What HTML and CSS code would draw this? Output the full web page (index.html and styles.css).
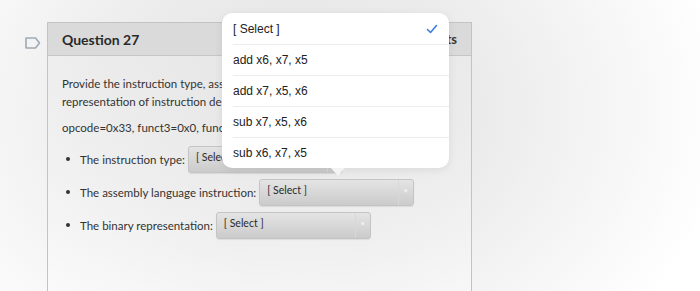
FILE: index.html
```html
<!DOCTYPE html>
<html lang="en">
<head>
    <meta charset="UTF-8">
    <meta name="viewport" content="width=device-width, initial-scale=1.0">
    <title>Question 27</title>
    <link rel="stylesheet" href="styles.css">
</head>
<body>
    <div class="quiz">
        <div class="flag">
            <svg width="16" height="12" viewBox="0 0 16 12">
                <path d="M1 1 H10.5 L14.5 6 L10.5 11 H1 Z" fill="none" stroke="#9fa9b5" stroke-width="1.6" stroke-linejoin="round"/>
            </svg>
        </div>
        <div class="question">
            <div class="header">
                <span class="title">Question 27</span>
                <span class="points">2 pts</span>
            </div>
            <div class="content">
                <p class="intro">Provide the instruction type, assembly language instruction, and binary representation of instruction described by the following RISC-V fields:</p>
                <p class="fields">opcode=0x33, funct3=0x0, funct7=0x20, rs1=5, rs2=6, rd=7</p>
                <ul class="answers">
                    <li><span class="label">The instruction type:</span><span class="select">[ Select ]<span class="arrow">&#9662;</span></span></li>
                    <li><span class="label">The assembly language instruction:</span><span class="select">[ Select ]<span class="arrow">&#9662;</span></span></li>
                    <li><span class="label">The binary representation:</span><span class="select">[ Select ]<span class="arrow">&#9662;</span></span></li>
                </ul>
            </div>
        </div>
    </div>

    <div class="picker">
        <div class="option selected">[ Select ]
            <svg class="check" width="12" height="10" viewBox="0 0 12 10">
                <path d="M1.5 5.5 L4.5 8.5 L10.5 1.5" fill="none" stroke="#3b7de0" stroke-width="1.6" stroke-linecap="round" stroke-linejoin="round"/>
            </svg>
        </div>
        <div class="option">add x6, x7, x5</div>
        <div class="option">add x7, x5, x6</div>
        <div class="option">sub x7, x5, x6</div>
        <div class="option">sub x6, x7, x5</div>
        <div class="tip"></div>
    </div>
</body>
</html>
```

FILE: styles.css
```css
body {
    margin: 0;
    height: 291px;
    overflow: hidden;
    font-family: Lato, "Open Sans", sans-serif;
    color: #2d3b45;
    background: radial-gradient(ellipse 430px 330px at 300px 110px, #e2e2e2 0%, #ececec 45%, #ffffff 100%);
}
.quiz {
    display: flex;
    padding: 22px 0 0 25px;
}
.flag {
    width: 22px;
    padding-top: 11px;
}
.question {
    width: 423px;
    height: 268px;
    border: 1px solid #c3c3c3;
    border-bottom: none;
    background: linear-gradient(180deg, rgba(230,230,230,0.4), rgba(255,255,255,0.3));
}
.header {
    display: flex;
    justify-content: space-between;
    align-items: center;
    height: 32px;
    padding: 0 14px;
    background: #dadada;
    border-bottom: 1px solid #c6c6c6;
}
.title {
    font-size: 14px;
    font-weight: bold;
    color: #2a2a2a;
}
.points {
    font-size: 13px;
    font-weight: bold;
    color: #3a3a3a;
}
.content {
    padding: 19px 14px 0 14px;
    font-size: 11.5px;
    line-height: 18px;
    color: #333;
}
.intro {
    margin: 0;
    width: 370px;
}
.fields {
    margin: 8px 0 0 0;
}
.answers {
    margin: 7px 0 0 0;
    padding-left: 18px;
    display: flex;
    flex-direction: column;
    gap: 6px;
}
.answers li {
    height: 27px;
    line-height: 27px;
}
.label {
    vertical-align: middle;
}
.select {
    display: inline-block;
    position: relative;
    vertical-align: middle;
    box-sizing: border-box;
    width: 155px;
    height: 27px;
    margin-left: 3px;
    padding: 3px 0 0 7px;
    font-size: 10.5px;
    line-height: 14px;
    color: #2a2a2a;
    border: 1px solid #c4c4c4;
    border-radius: 3px;
    background: linear-gradient(180deg, #e4e4e4, #cbcbcb);
    box-shadow: 0 1px 1px rgba(0,0,0,0.08);
}
.arrow {
    position: absolute;
    top: 0;
    right: 0;
    width: 14px;
    height: 25px;
    border-left: 1px solid #d8d8d8;
    font-size: 7px;
    line-height: 20px;
    text-align: center;
    color: #f2f2f2;
}
.picker {
    position: absolute;
    left: 222px;
    top: 13px;
    width: 227px;
    background: #fff;
    border-radius: 10px;
    box-shadow: 0 2px 8px rgba(0,0,0,0.08);
    font-family: "Liberation Sans", Arial, sans-serif;
    font-size: 12px;
    color: #222;
}
.option {
    display: flex;
    justify-content: space-between;
    align-items: center;
    height: 31px;
    margin-left: 11px;
    padding-right: 11px;
    border-top: 1px solid #ececec;
    box-sizing: border-box;
}
.option.selected {
    border-top: none;
}
.tip {
    position: absolute;
    left: 109px;
    bottom: -8px;
    width: 0;
    height: 0;
    border-left: 7px solid transparent;
    border-right: 7px solid transparent;
    border-top: 8px solid #f3f3f3;
}
```
